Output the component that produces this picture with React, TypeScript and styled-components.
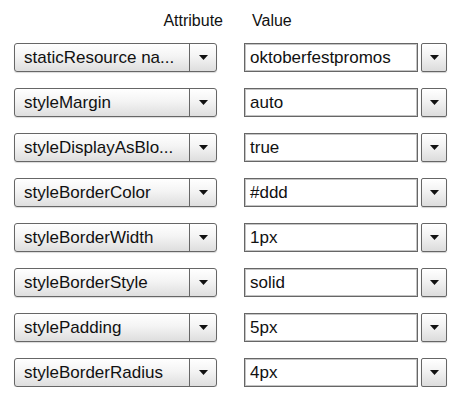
import React from 'react';
import styled, { createGlobalStyle } from 'styled-components';

type RowType = {
    attribute: string;
    value: string;
}

const rows: RowType[] = [
    { attribute: 'staticResource na...', value: 'oktoberfestpromos' },
    { attribute: 'styleMargin', value: 'auto' },
    { attribute: 'styleDisplayAsBlo...', value: 'true' },
    { attribute: 'styleBorderColor', value: '#ddd' },
    { attribute: 'styleBorderWidth', value: '1px' },
    { attribute: 'styleBorderStyle', value: 'solid' },
    { attribute: 'stylePadding', value: '5px' },
    { attribute: 'styleBorderRadius', value: '4px' },
];

const GlobalStyle = createGlobalStyle`
    body {
        margin: 0;
        background: #fff;
        font-family: "Liberation Sans", Arial, sans-serif;
        color: #111;
    }
`

const Arrow = () => (
    <svg width="9" height="5" viewBox="0 0 9 5">
        <polygon points="0,0 9,0 4.5,5" fill="#111" />
    </svg>
);

export default function App() {
    return (
        <>
            <GlobalStyle />
            <Table>
                <HeadAttribute>Attribute</HeadAttribute>
                <HeadValue>Value</HeadValue>
                {rows.map((row) => (
                    <React.Fragment key={row.attribute}>
                        <Select>
                            <SelectLabel>{row.attribute}</SelectLabel>
                            <SelectToggle>
                                <Arrow />
                            </SelectToggle>
                        </Select>
                        <Combo>
                            <ValueInput>{row.value}</ValueInput>
                            <ComboButton>
                                <Arrow />
                            </ComboButton>
                        </Combo>
                    </React.Fragment>
                ))}
            </Table>
        </>
    );
}

const Table = styled.div`
    display: grid;
    grid-template-columns: 203px 203px;
    column-gap: 27px;
    row-gap: 16px;
    padding: 11px 0 0 14px;
`

const HeadAttribute = styled.div`
    font-size: 16px;
    line-height: 20px;
    text-align: right;
    margin-right: -6px;
    margin-bottom: -4px;
`

const HeadValue = styled.div`
    font-size: 16px;
    line-height: 20px;
    padding-left: 8px;
    margin-bottom: -4px;
`

const Select = styled.div`
    display: flex;
    height: 29px;
    box-sizing: border-box;
    border: 1px solid #666;
    border-radius: 3px;
    background: linear-gradient(#ffffff, #f4f4f4 45%, #dedede);
    box-shadow: 0 1px 1px rgba(0, 0, 0, 0.15);
`

const SelectLabel = styled.div`
    flex: 1;
    display: flex;
    align-items: center;
    padding-left: 9px;
    font-size: 17px;
    white-space: nowrap;
    overflow: hidden;
`

const SelectToggle = styled.div`
    width: 26px;
    display: flex;
    align-items: center;
    justify-content: center;
    border-left: 1px solid #666;
`

const Combo = styled.div`
    display: flex;
    gap: 3px;
    height: 29px;
`

const ValueInput = styled.div`
    flex: 1;
    display: flex;
    align-items: center;
    box-sizing: border-box;
    padding-left: 5px;
    border: 1px solid #666;
    box-shadow: inset 0 0 0 1px #c4c4c4;
    background: #fff;
    font-size: 17px;
`

const ComboButton = styled.div`
    width: 26px;
    box-sizing: border-box;
    display: flex;
    align-items: center;
    justify-content: center;
    border: 1px solid #666;
    border-radius: 2px;
    background: linear-gradient(#ffffff, #f2f2f2 45%, #dcdcdc);
    box-shadow: 0 1px 1px rgba(0, 0, 0, 0.18);
`
